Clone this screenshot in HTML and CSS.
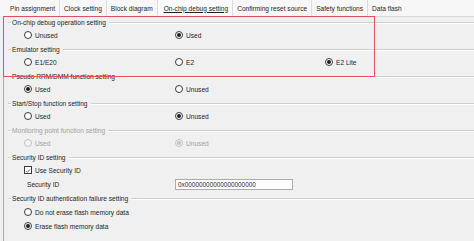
FILE: index.html
```html
<!DOCTYPE html>
<html lang="en">
<head>
    <meta charset="UTF-8">
    <title>On-chip debug setting</title>
    <link rel="stylesheet" href="styles.css">
</head>
<body>
    <!-- Tab strip -->
    <div class="tabs">
        <span class="tab">Pin assignment</span>
        <span class="tab">Clock setting</span>
        <span class="tab">Block diagram</span>
        <span class="tab selected">On-chip debug setting</span>
        <span class="tab">Confirming reset source</span>
        <span class="tab">Safety functions</span>
        <span class="tab">Data flash</span>
    </div>

    <div class="panel">
        <div class="group">
            <div class="group-title"><span>On-chip debug operation setting</span></div>
            <div class="options">
                <label class="opt"><span class="radio"></span>Unused</label>
                <label class="opt"><span class="radio on"></span>Used</label>
            </div>
        </div>

        <div class="group">
            <div class="group-title"><span>Emulator setting</span></div>
            <div class="options">
                <label class="opt"><span class="radio"></span>E1/E20</label>
                <label class="opt"><span class="radio"></span>E2</label>
                <label class="opt"><span class="radio on"></span>E2 Lite</label>
            </div>
        </div>

        <div class="group">
            <div class="group-title"><span>Pseudo RRM/DMM function setting</span></div>
            <div class="options">
                <label class="opt"><span class="radio on"></span>Used</label>
                <label class="opt"><span class="radio"></span>Unused</label>
            </div>
        </div>

        <div class="group">
            <div class="group-title"><span>Start/Stop function setting</span></div>
            <div class="options">
                <label class="opt"><span class="radio"></span>Used</label>
                <label class="opt"><span class="radio on"></span>Unused</label>
            </div>
        </div>

        <div class="group disabled">
            <div class="group-title"><span>Monitoring point function setting</span></div>
            <div class="options">
                <label class="opt"><span class="radio"></span>Used</label>
                <label class="opt"><span class="radio on"></span>Unused</label>
            </div>
        </div>

        <div class="group security">
            <div class="group-title"><span>Security ID setting</span></div>
            <div class="options">
                <label class="opt"><span class="check">
                    <svg width="8" height="8" viewBox="0 0 8 8"><path d="M1.5 4.2 L3.2 5.8 L6.6 2" fill="none" stroke="#222" stroke-width="0.9"/></svg>
                </span>Use Security ID</label>
            </div>
            <div class="options">
                <span class="opt plain">Security ID</span>
                <span class="field">0x00000000000000000000</span>
            </div>
        </div>

        <div class="group">
            <div class="group-title"><span>Security ID authentication failure setting</span></div>
            <div class="stack">
                <label class="opt"><span class="radio"></span>Do not erase flash memory data</label>
                <label class="opt"><span class="radio on"></span>Erase flash memory data</label>
            </div>
        </div>
    </div>

    <!-- Annotation frame drawn over the screenshot -->
    <div class="highlight"></div>
</body>
</html>
```

FILE: styles.css
```css
/* Basic page styling */
body {
    margin: 0;
    font-family: "Liberation Sans", Arial, sans-serif;
    font-size: 6.6px;
    color: #1e1e1e;
    background-color: #f0f0f0;
    width: 474px;
    height: 241px;
    overflow: hidden;
    position: relative;
}

/* Tab strip */
.tabs {
    display: flex;
    height: 16px;
    padding-left: 6px;
    background-color: #f7f7f7;
}

.tab {
    display: flex;
    align-items: center;
    padding: 0 4px;
    border-right: 1px solid #dcdcdc;
    white-space: nowrap;
}

.tab.selected {
    padding: 0 4px 0 6px;
    text-decoration: underline;
    background-color: #fbfbfb;
}

.tab:last-child {
    border-right: none;
}

/* Main panel */
.panel {
    margin-left: 3px;
    border-left: 1px solid #a8a8a8;
    border-top: 1px solid #d9d9d9;
    padding-left: 4px;
    height: 230px;
}

.group {
    height: 27px;
}

.group.security {
    height: 41px;
}

/* Etched group heading line */
.group-title {
    display: flex;
    align-items: center;
    height: 11px;
}

.group-title::before,
.group-title::after {
    content: "";
    height: 0;
    border-top: 1px solid #cfcfcf;
    border-bottom: 1px solid #ffffff;
}

.group-title::before {
    width: 3px;
}

.group-title::after {
    flex: 1;
    margin-left: 3px;
}

.group-title span {
    padding-left: 1px;
    white-space: nowrap;
}

/* Option rows */
.options {
    display: grid;
    grid-template-columns: 151px 150px 1fr;
    margin-left: 16px;
    height: 14px;
    align-items: center;
}

.stack {
    margin-left: 16px;
    padding-top: 1px;
}

.stack .opt {
    height: 14px;
}

.opt {
    display: flex;
    align-items: center;
    white-space: nowrap;
}

.radio {
    width: 6px;
    height: 6px;
    border: 1px solid #3a3a3a;
    border-radius: 50%;
    background-color: #fff;
    margin-right: 3px;
    display: flex;
    align-items: center;
    justify-content: center;
    box-sizing: content-box;
}

.radio.on::after {
    content: "";
    width: 4px;
    height: 4px;
    border-radius: 50%;
    background-color: #1e1e1e;
}

.check {
    width: 8px;
    height: 8px;
    border: 1px solid #3a3a3a;
    background-color: #fff;
    margin-right: 3px;
    box-sizing: border-box;
    display: flex;
}

.plain {
    padding-left: 3px;
}

.field {
    width: 118px;
    height: 11px;
    border: 1px solid #acacac;
    background-color: #fff;
    box-sizing: border-box;
    display: flex;
    align-items: center;
    padding-left: 2px;
    font-size: 6.4px;
}

/* Greyed out group */
.disabled {
    color: #a2a2a2;
}

.disabled .radio {
    border-color: #c2c2c2;
    background-color: #f4f4f4;
}

.disabled .radio.on::after {
    background-color: #c2c2c2;
}

/* Red annotation frame */
.highlight {
    position: absolute;
    left: 3px;
    top: 16px;
    width: 372px;
    height: 61px;
    border: 1.5px solid #e2505c;
    box-sizing: border-box;
    pointer-events: none;
}
```
